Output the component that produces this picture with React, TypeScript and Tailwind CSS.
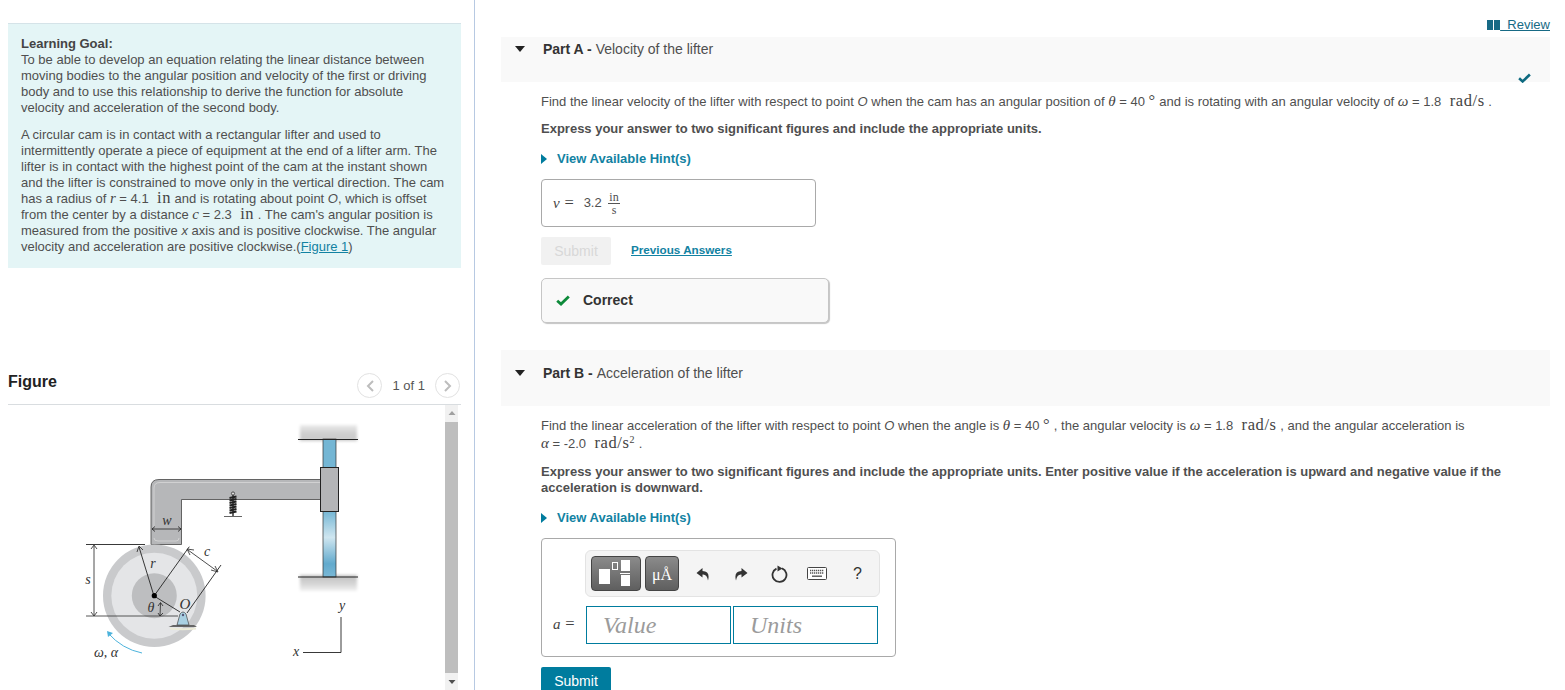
import React from "react";

const M = ({ children }: { children: React.ReactNode }) => (
  <span className="font-['Liberation_Serif','DejaVu_Serif',serif] text-[16.5px] leading-[0] tracking-[0.6px] text-[#444]">{children}</span>
);
const I = ({ children }: { children: React.ReactNode }) => (
  <span className="font-['Liberation_Serif',serif] text-[15px] italic leading-[0] text-[#444]">{children}</span>
);

function Figure() {
  return (
    <svg width="300" height="240" viewBox="0 0 300 240" className="block">
      <defs>
        <linearGradient id="rod" x1="0" x2="0" y1="0" y2="1">
          <stop offset="0" stopColor="#74b6d4" />
          <stop offset="0.4" stopColor="#cfe6f0" />
          <stop offset="0.8" stopColor="#62aacd" />
          <stop offset="1" stopColor="#7ab8d6" />
        </linearGradient>
        <linearGradient id="sh1" x1="0" x2="0" y1="0" y2="1">
          <stop offset="0" stopColor="#bdbdbd" />
          <stop offset="0.6" stopColor="#d8d8d8" />
          <stop offset="1" stopColor="#f2f2f2" />
        </linearGradient>
        <linearGradient id="sh2" x1="0" x2="0" y1="0" y2="1">
          <stop offset="0" stopColor="#ececec" />
          <stop offset="0.5" stopColor="#cfcfcf" />
          <stop offset="1" stopColor="#c8c8c8" />
        </linearGradient>
        <filter id="soft" x="-10%" y="-30%" width="120%" height="160%">
          <feGaussianBlur stdDeviation="1.6" />
        </filter>
      </defs>
      <rect x="240" y="5" width="57" height="16" fill="url(#sh2)" filter="url(#soft)" />
      <rect x="240" y="155" width="57" height="16" fill="url(#sh1)" filter="url(#soft)" />
      <rect x="263" y="19" width="13" height="30" fill="#74b6d4" stroke="#333" strokeWidth="0.7" />
      <rect x="263" y="91" width="13" height="66" fill="url(#rod)" stroke="#333" strokeWidth="0.7" />
      <line x1="238" y1="19.5" x2="298" y2="19.5" stroke="#222" strokeWidth="1.2" />
      <line x1="238" y1="157" x2="298" y2="157" stroke="#222" strokeWidth="1.2" />
      {/* arm */}
      <path d="M91 124.5 V67 Q91 59.5 99 59.5 H261 V79.5 H121.5 V124.5 Z" fill="#b6b7b9" stroke="#444" strokeWidth="0.8" />
      <path d="M94 118 Q94 121 98 121 H116 Q119 121 119 118 M94 108 V68 Q94 62.5 100 62.5 H261" fill="none" stroke="#d8d8d8" strokeWidth="0.8" />
      <rect x="260.5" y="47.5" width="18" height="44" fill="#b4b5b7" stroke="#222" strokeWidth="1" />
      {/* spring */}
      <circle cx="173" cy="73.5" r="1.6" fill="#ddd" stroke="#333" strokeWidth="0.8" />
      <line x1="173" y1="75" x2="173" y2="96" stroke="#333" strokeWidth="1.5" />
      <path d="M169.5 78 L176.5 76.5 M169.5 80.5 L176.5 79 M169.5 83 L176.5 81.5 M169.5 85.5 L176.5 84 M169.5 88 L176.5 86.5 M169.5 90.5 L176.5 89 M169.5 93 L176.5 91.5" stroke="#222" strokeWidth="1.8" />
      <line x1="164" y1="96.5" x2="182" y2="96.5" stroke="#666" strokeWidth="1" />
      {/* cam */}
      <circle cx="94.3" cy="175.7" r="51.3" fill="#c9cacc" />
      <circle cx="94.3" cy="175.7" r="43" fill="#e4e5e7" />
      <circle cx="94.3" cy="175.7" r="22.5" fill="#bdbec0" />
      {/* dims */}
      <line x1="26" y1="124.5" x2="85" y2="124.5" stroke="#222" strokeWidth="0.9" />
      <line x1="26" y1="196" x2="118" y2="196" stroke="#444" strokeWidth="0.9" />
      <line x1="34" y1="126" x2="34" y2="195" stroke="#222" strokeWidth="0.8" />
      <path d="M31 129 L34 125 L37 129 M31 192 L34 196 L37 192" fill="none" stroke="#222" strokeWidth="0.8" />
      <line x1="94" y1="176" x2="79" y2="127" stroke="#222" strokeWidth="0.9" />
      <path d="M77 132 L79 126 L83 130" fill="none" stroke="#222" strokeWidth="0.8" />
      <line x1="94" y1="176" x2="129.3" y2="126.7" stroke="#222" strokeWidth="0.9" />
      <line x1="127" y1="193" x2="161" y2="145" stroke="#222" strokeWidth="0.9" />
      <line x1="128" y1="130" x2="157" y2="151" stroke="#222" strokeWidth="0.8" />
      <path d="M130 135 L127 129 L134 130 M151 150 L158 152 L155 146" fill="none" stroke="#222" strokeWidth="0.8" />
      <line x1="94" y1="176" x2="120" y2="192" stroke="#222" strokeWidth="0.9" />
      <circle cx="94.3" cy="175.7" r="2.6" fill="#000" />
      <line x1="100.5" y1="183" x2="100" y2="196" stroke="#222" strokeWidth="0.8" />
      <path d="M98 186 L100.5 182.5 L103 186 M98 193 L100 196 L103 193" fill="none" stroke="#222" strokeWidth="0.8" />
      {/* pin */}
      <path d="M108.5 207 L113 205 H134 L137 207 Z" fill="#666" />
      <path d="M117 205 L120 194 Q123 190 126 194 L129 205 Z" fill="#a9d0e2" stroke="#444" strokeWidth="0.7" />
      <circle cx="123" cy="195" r="1.2" fill="#557" />
      <path d="M110 208.5 Q122 210 136 208.5" stroke="#ecebd8" strokeWidth="2" fill="none" />
      {/* w */}
      <line x1="92" y1="109" x2="121" y2="109" stroke="#222" strokeWidth="0.8" />
      <path d="M95 106.5 L92 109 L95 111.5 M118 106.5 L121 109 L118 111.5" fill="none" stroke="#222" strokeWidth="0.8" />
      {/* axes */}
      <path d="M281 197 V232.5 H243" fill="none" stroke="#222" strokeWidth="0.9" />
      {/* omega arrow */}
      <path d="M82 233 Q62 229 48 213" fill="none" stroke="#4cb3dc" strokeWidth="1" />
      <path d="M47 211 L48 217 L53 213 Z" fill="#4cb3dc" />
      <g className="font-['Liberation_Serif',serif] italic" fill="#333" fontSize="14">
        <text x="107" y="105" textAnchor="middle">w</text>
        <text x="147" y="136" textAnchor="middle">c</text>
        <text x="93" y="148" textAnchor="middle">r</text>
        <text x="28" y="164" textAnchor="middle">s</text>
        <text x="91" y="192" textAnchor="middle">θ</text>
        <text x="125" y="189" textAnchor="middle" fontSize="15">O</text>
        <text x="282" y="190" textAnchor="middle">y</text>
        <text x="236" y="236" textAnchor="middle">x</text>
        <text x="46" y="237" textAnchor="middle">ω, α</text>
      </g>
    </svg>
  );
}

const CheckIcon = ({ c, s }: { c: string; s: number }) => (
  <svg width={s} height={s * 0.8} viewBox="0 0 14 11">
    <path d="M1.2 5.6 L5 9 L12.8 1.5" fill="none" stroke={c} strokeWidth="2.8" />
  </svg>
);

const DownTri = () => (
  <svg width="10" height="6" viewBox="0 0 10 6" className="block"><path d="M0 0H10L5 6Z" fill="#222" /></svg>
);

const Hint = () => (
  <div className="flex h-4 items-center gap-[10px] text-[13px] font-bold leading-4 text-[#1282a2]">
    <svg width="6" height="10" viewBox="0 0 6 10"><path d="M0 0L6 5L0 10Z" fill="#007c9e" /></svg>
    <span>View Available Hint(s)</span>
  </div>
);

function Toolbar() {
  return (
    <div className="ml-[43px] flex h-[47px] w-[295px] items-center rounded-md border border-[#e3e3e3] bg-[#f4f4f4] pl-[5px]">
      <div className="relative h-[35px] w-[50px] rounded-[4px] border border-[#444] bg-gradient-to-b from-[#8b8b8b] to-[#5f5f5f]">
        <div className="absolute left-[7px] top-[12px] h-[15px] w-[11px] bg-white" />
        <div className="absolute left-[20px] top-[5px] h-[8px] w-[6px] border border-white" />
        <div className="absolute left-[29px] top-[3px] h-[11px] w-[9px] bg-white" />
        <div className="absolute left-[28px] top-[16px] h-px w-[10px] bg-white" />
        <div className="absolute left-[29px] top-[18px] h-[11px] w-[9px] bg-white" />
      </div>
      <div className="ml-[4px] flex h-[35px] w-[34px] items-center justify-center rounded-[4px] border border-[#444] bg-gradient-to-b from-[#8b8b8b] to-[#5f5f5f] pt-[2px] font-['Liberation_Serif',serif] text-[16px] text-white">μÅ</div>
      <svg className="ml-[17px]" width="14" height="14" viewBox="0 0 14 14"><path d="M6.5 1 L0.5 6 L6.5 10.5 V7.5 Q11 7 12 13.5 Q14.5 4.5 6.5 4 Z" fill="#333" /></svg>
      <svg className="ml-[24px]" width="14" height="14" viewBox="0 0 14 14"><path d="M7.5 1 L13.5 6 L7.5 10.5 V7.5 Q3 7 2 13.5 Q-0.5 4.5 7.5 4 Z" fill="#333" /></svg>
      <svg className="ml-[23px]" width="17" height="18" viewBox="0 0 17 18"><path d="M5.5 3.6 A7 7 0 1 0 11 3.4" fill="none" stroke="#333" strokeWidth="1.8" /><path d="M6.5 0.5 V6.5 L11.5 3.5Z" fill="#333" /></svg>
      <svg className="ml-[19px]" width="20" height="13" viewBox="0 0 20 13"><rect x="0.5" y="0.5" width="19" height="12" rx="1" fill="#fff" stroke="#444" /><path d="M3 3.5H17M3 6H17" stroke="#555" strokeWidth="1.4" strokeDasharray="1.3 0.7" /><path d="M5 9.2H15" stroke="#555" strokeWidth="1.4" /></svg>
      <span className="ml-[26px] text-[16px] text-[#333]">?</span>
    </div>
  );
}

export default function App() {
  return (
    <div className="flex h-[690px] w-[1565px] overflow-hidden bg-white font-['Liberation_Sans',Arial,sans-serif] text-[13px] leading-4 text-[#4f4f4f]">
      {/* left column */}
      <div className="w-[475px] shrink-0 border-r border-[#b7c9e2] pl-2 pr-[13px] pt-[23px]">
        <div className="h-[245px] border-t border-[#d5e3e8] bg-[#e4f5f6] px-[13px] pt-[12px]">
          <p className="font-bold text-[#444]">Learning Goal:</p>
          <p>To be able to develop an equation relating the linear distance between moving bodies to the angular position and velocity of the first or driving body and to use this relationship to derive the function for absolute velocity and acceleration of the second body.</p>
          <p className="mt-[11px]">
            A circular cam is in contact with a rectangular lifter and used to intermittently operate a piece of equipment at the end of a lifter arm. The lifter is in contact with the highest point of the cam at the instant shown and the lifter is constrained to move only in the vertical direction. The cam has a radius of <I>r</I> = 4.1 <M>&nbsp;in</M> and is rotating about point <i>O</i>, which is offset from the center by a distance <I>c</I> = 2.3 <M>&nbsp;in</M> . The cam's angular position is measured from the positive <i>x</i> axis and is positive clockwise. The angular velocity and acceleration are positive clockwise.(<span className="text-[#1282a2] underline">Figure 1</span>)
          </p>
        </div>
        <div className="mt-[103px] flex h-[34px] items-start justify-between border-b border-[#d9dde0]">
          <span className="mt-px text-[16px] font-bold leading-5 text-[#222]">Figure</span>
          <div className="mr-px mt-[2px] flex items-center gap-[10px] text-[#555]">
            <span className="flex h-[25px] w-[25px] items-center justify-center rounded-full border border-[#e2e2e2]">
              <svg width="8" height="12" viewBox="0 0 8 12"><path d="M7 1L2 6L7 11" fill="none" stroke="#bdbdbd" strokeWidth="2" /></svg>
            </span>
            <span>1 of 1</span>
            <span className="flex h-[25px] w-[25px] items-center justify-center rounded-full border border-[#e2e2e2]">
              <svg width="8" height="12" viewBox="0 0 8 12"><path d="M1 1L6 6L1 11" fill="none" stroke="#bdbdbd" strokeWidth="2" /></svg>
            </span>
          </div>
        </div>
        <div className="flex h-[285px] justify-between">
          <div className="pl-[52px] pt-[15px]"><Figure /></div>
          <div className="mr-[3px] flex w-[13px] flex-col items-center bg-[#f1f1f1]">
            <svg width="8" height="17" viewBox="0 0 8 17" className="shrink-0"><path d="M0.5 10H7.5L4 6Z" fill="#a0a0a0" /></svg>
            <div className="w-full flex-1 bg-[#bebebe]" />
            <svg width="8" height="17" viewBox="0 0 8 17" className="shrink-0"><path d="M0.5 7H7.5L4 11Z" fill="#505050" /></svg>
          </div>
        </div>
      </div>

      {/* right column */}
      <div className="flex-1 pl-[26px] pr-[15px]">
        <div className="flex h-[37px] items-start justify-end pt-[17px]">
          <span className="flex items-center leading-[15px] text-[#176a85] underline">
            <svg width="13" height="10" viewBox="0 0 13 10"><path d="M0 0H6V10H0ZM7 0H13V10H7Z" fill="#176a85" /></svg>
            <span className="whitespace-pre">  Review</span>
          </span>
        </div>

        {/* Part A */}
        <div className="relative flex h-[45px] items-start bg-[#f9f9f9] pt-[4px] text-[14px]">
          <div className="ml-[14px] mt-[5px]"><DownTri /></div>
          <div className="ml-[18px]"><b className="font-bold text-[#333]">Part A - </b><span>Velocity of the lifter</span></div>
          <div className="absolute bottom-[-1px] right-[19px]"><CheckIcon c="#0e6a80" s={13} /></div>
        </div>
        <div className="pl-[40px]">
          <p className="mt-[12px]">Find the linear velocity of the lifter with respect to point <i>O</i> when the cam has an angular position of <I>θ</I> = 40 <M>°</M> and is rotating with an angular velocity of <I>ω</I> = 1.8 <M>&nbsp;rad/s</M> .</p>
          <p className="mt-[11px] font-bold">Express your answer to two significant figures and include the appropriate units.</p>
          <div className="mt-[14px]"><Hint /></div>
          <div className="mt-3 flex h-[48px] w-[275px] items-center rounded-[4px] border border-[#a9a9a9] pl-[11px]">
            <I>v</I><M>&nbsp;=&nbsp;</M><span className="ml-px">&nbsp;3.2&nbsp;</span>
            <span className="ml-[3px] inline-flex flex-col items-center font-['Liberation_Serif',serif] text-[12px] leading-[12px]">
              <span className="border-b border-[#555] px-px">in</span>
              <span>s</span>
            </span>
          </div>
          <div className="mt-[10px] flex items-center">
            <div className="flex h-[28px] w-[70px] items-center justify-center rounded-[2px] bg-[#f1f1f1] text-[14px] text-[#d8d8d8]">Submit</div>
            <span className="-mt-[2px] ml-[20px] text-[11.7px] font-bold text-[#1282a2] underline">Previous Answers</span>
          </div>
          <div className="mt-[13px] flex h-[45px] w-[288px] items-center rounded-[5px] border border-[#c6c6c6] bg-[#f9f9f9] pl-[14px] shadow-[1px_1px_1px_#c4c4c4]">
            <CheckIcon c="#0d8a3a" s={14} />
            <span className="-mt-px ml-[13px] text-[14px] font-bold text-[#333]">Correct</span>
          </div>
        </div>

        {/* Part B */}
        <div className="mt-[27px] flex h-[56px] items-start bg-[#f9f9f9] pt-[15px] text-[14px]">
          <div className="ml-[14px] mt-[5px]"><DownTri /></div>
          <div className="ml-[18px]"><b className="font-bold text-[#333]">Part B - </b><span>Acceleration of the lifter</span></div>
        </div>
        <div className="pl-[40px] pr-[45px]">
          <p className="mt-[11px] leading-[18px]">Find the linear acceleration of the lifter with respect to point <i>O</i> when the angle is <I>θ</I> = 40 <M>°</M> , the angular velocity is <I>ω</I> = 1.8 <M>&nbsp;rad/s</M> , and the angular acceleration is<br /><I>α</I> = -2.0 <M>&nbsp;rad/s<sup className="text-[10px]">2</sup></M> .</p>
          <p className="mt-[11px] font-bold">Express your answer to two significant figures and include the appropriate units. Enter positive value if the acceleration is upward and negative value if the acceleration is downward.</p>
          <div className="mt-[14px]"><Hint /></div>
          <div className="mt-3 h-[119px] w-[355px] rounded-[4px] border border-[#a9a9a9] pt-[11px]">
            <Toolbar />
            <div className="ml-[11px] mt-[9px] flex items-center">
              <span className="w-[33px] shrink-0"><I>a</I><M>&nbsp;=</M></span>
              <div className="flex h-[38px] w-[145px] items-center border border-[#007c9e] pl-[16px] font-['Liberation_Serif',serif] text-[24px] italic text-[#9b9b9b]">Value</div>
              <div className="ml-[2px] flex h-[38px] w-[145px] items-center border border-[#007c9e] pl-[16px] font-['Liberation_Serif',serif] text-[24px] italic text-[#9b9b9b]">Units</div>
            </div>
          </div>
          <div className="mt-[10px] flex h-[28px] w-[70px] items-center justify-center rounded-[2px] bg-[#007c9e] text-[14px] text-white">Submit</div>
        </div>
      </div>
    </div>
  );
}
